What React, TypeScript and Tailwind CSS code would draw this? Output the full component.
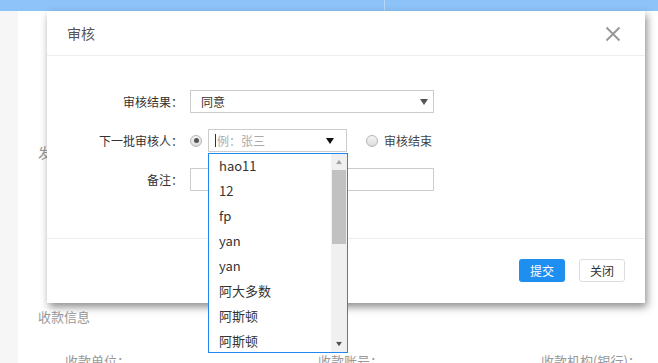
import React from 'react';

const options = ['hao11', '12', 'fp', 'yan', 'yan', '阿大多数', '阿斯顿', '阿斯顿'];

const font = { fontFamily: '"Noto Sans CJK SC", "Noto Sans", sans-serif' };

const Caret: React.FC<{ className?: string }> = ({ className }) => (
  <svg width="8" height="6" viewBox="0 0 8 6" className={className}>
    <path d="M0 0h8L4 6z" fill="currentColor" />
  </svg>
);

const Radio: React.FC<{ checked?: boolean }> = ({ checked }) => (
  <span className="flex h-[12px] w-[12px] items-center justify-center rounded-full border border-[#b5b5b5] bg-gradient-to-b from-[#f4f4f4] to-[#dcdcdc]">
    {checked && <span className="h-[5px] w-[5px] rounded-full bg-[#555]" />}
  </span>
);

export default function App() {
  return (
    <div className="relative h-[363px] w-[658px] overflow-hidden bg-white text-[12px] text-[#333]" style={font}>
      {/* page behind the dialog */}
      <div className="flex h-[11px]">
        <div className="w-[384px] bg-[#8dc3f9]" />
        <div className="w-px bg-[#b4d8fb]" />
        <div className="flex-1 bg-[#8dc3f9]" />
      </div>
      <div className="flex h-[352px]">
        <div className="w-[18px] bg-[#f6f6f6]" />
        <div className="flex-1 pl-[20px]">
          <div className="pt-[131px] text-[14px] text-[#999]">发</div>
          <div className="pt-[144px] text-[13px] text-[#999]">收款信息</div>
          <div className="flex pt-[24px] text-[13px] text-[#999]">
            <span className="pl-[27px]">收款单位：</span>
            <span className="pl-[188px]">收款账号：</span>
            <span className="pl-[158px]">收款机构(银行)：</span>
          </div>
        </div>
      </div>

      {/* dialog */}
      <div className="absolute left-[47px] top-[11px] flex h-[292px] w-[598px] flex-col bg-white shadow-[2px_4px_8px_rgba(0,0,0,0.45)]">
        <div className="flex h-[45px] items-center justify-between border-b border-[#eee] pl-[20px] pr-[24px]">
          <span className="text-[14px] text-[#555]">审核</span>
          <svg width="16" height="16" viewBox="0 0 16 16" className="mt-[2px]">
            <path d="M1.5 1.5l13 13M14.5 1.5l-13 13" stroke="#999" strokeWidth="2" />
          </svg>
        </div>

        <div className="flex flex-1 flex-col gap-[16px] border-b border-[#eee] pt-[34px]">
          <div className="flex h-[23px] items-center">
            <span className="w-[136px] text-right">审核结果：</span>
            <div className="ml-[7px] flex h-[23px] w-[244px] items-center justify-between border border-[#ccc] pl-[10px] pr-[5px]">
              <span>同意</span>
              <Caret className="text-[#555]" />
            </div>
          </div>
          <div className="flex h-[23px] items-center">
            <span className="w-[136px] text-right">下一批审核人：</span>
            <span className="ml-[7px]">
              <Radio checked />
            </span>
            <div className="ml-[6px] flex h-[23px] w-[139px] items-center justify-between border border-[#ccc] pl-[6px] pr-[12px]">
              <span className="flex items-center text-[#aaa]">
                <span className="mr-px h-[13px] w-px bg-[#333]" />
                例：张三
              </span>
              <Caret className="text-[#111]" />
            </div>
            <span className="ml-[19px]">
              <Radio />
            </span>
            <span className="ml-[6px] text-[#444]">审核结束</span>
          </div>
          <div className="flex h-[23px] items-center">
            <span className="w-[136px] text-right">备注：</span>
            <div className="ml-[7px] h-[23px] w-[244px] border border-[#ccc]" />
          </div>
        </div>

        <div className="flex h-[64px] items-start justify-end gap-[14px] pr-[20px] pt-[20px]">
          <button className="h-[23px] w-[46px] rounded-[3px] bg-[#1e8ff0] text-[12px] text-white">提交</button>
          <button className="h-[23px] w-[46px] rounded-[3px] border border-[#ddd] bg-white text-[12px] text-[#333]">关闭</button>
        </div>
      </div>

      {/* open dropdown */}
      <div className="absolute left-[208px] top-[153px] flex h-[200px] w-[140px] border border-[#1e88f0] bg-white">
        <ul className="-mt-px flex-1">
          {options.map((o, i) => (
            <li key={i} className="flex h-[25px] items-center pl-[10px] text-[13px] text-[#333]">
              {o}
            </li>
          ))}
        </ul>
        <div className="flex w-[16px] flex-col bg-[#f0f0f0]">
          <div className="flex h-[16px] items-center justify-center">
            <Caret className="rotate-180 scale-75 text-[#a3a3a3]" />
          </div>
          <div className="mx-[1px] h-[74px] bg-[#c1c1c1]" />
          <div className="flex-1" />
          <div className="flex h-[16px] items-center justify-center">
            <Caret className="scale-75 text-[#505050]" />
          </div>
        </div>
      </div>
    </div>
  );
}
